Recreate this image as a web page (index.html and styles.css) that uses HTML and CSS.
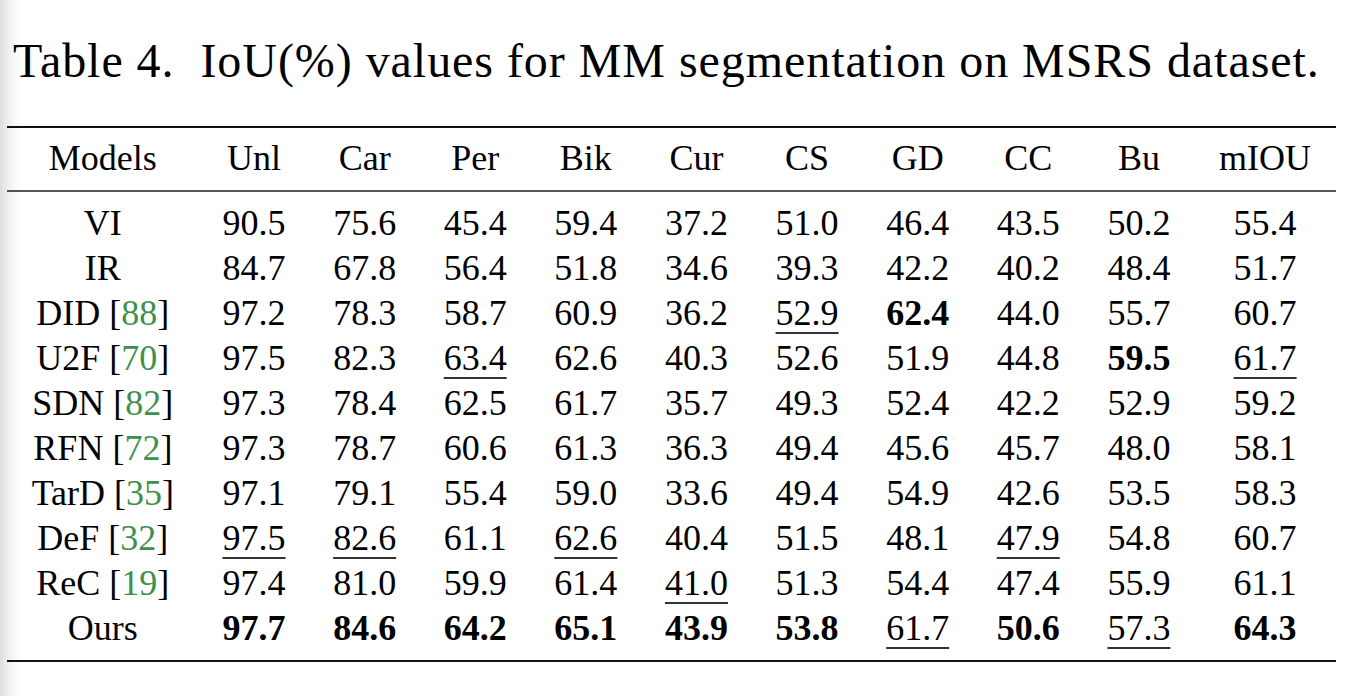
FILE: index.html
```html
<!DOCTYPE html>
<html lang="en">
<head>
<meta charset="utf-8">
<title>Table 4</title>
<link rel="stylesheet" href="styles.css">
</head>
<body>
<div class="page">
  <div class="caption">Table 4.&nbsp; IoU(%) values for MM segmentation on MSRS dataset.</div>
  <table class="results">
    <colgroup>
      <col class="c-model">
      <col class="c-num"><col class="c-num"><col class="c-num"><col class="c-num"><col class="c-num">
      <col class="c-num"><col class="c-num"><col class="c-num"><col class="c-num">
      <col class="c-miou">
    </colgroup>
    <thead>
      <tr>
        <th>Models</th><th>Unl</th><th>Car</th><th>Per</th><th>Bik</th><th>Cur</th><th>CS</th><th>GD</th><th>CC</th><th>Bu</th><th>mIOU</th>
      </tr>
    </thead>
    <tbody>
      <tr class="first">
        <td>VI</td><td>90.5</td><td>75.6</td><td>45.4</td><td>59.4</td><td>37.2</td><td>51.0</td><td>46.4</td><td>43.5</td><td>50.2</td><td>55.4</td>
      </tr>
      <tr>
        <td>IR</td><td>84.7</td><td>67.8</td><td>56.4</td><td>51.8</td><td>34.6</td><td>39.3</td><td>42.2</td><td>40.2</td><td>48.4</td><td>51.7</td>
      </tr>
      <tr>
        <td>DID [<span class="ref">88</span>]</td><td>97.2</td><td>78.3</td><td>58.7</td><td>60.9</td><td>36.2</td><td><span class="second">52.9</span></td><td><b>62.4</b></td><td>44.0</td><td>55.7</td><td>60.7</td>
      </tr>
      <tr>
        <td>U2F [<span class="ref">70</span>]</td><td>97.5</td><td>82.3</td><td><span class="second">63.4</span></td><td>62.6</td><td>40.3</td><td>52.6</td><td>51.9</td><td>44.8</td><td><b>59.5</b></td><td><span class="second">61.7</span></td>
      </tr>
      <tr>
        <td>SDN [<span class="ref">82</span>]</td><td>97.3</td><td>78.4</td><td>62.5</td><td>61.7</td><td>35.7</td><td>49.3</td><td>52.4</td><td>42.2</td><td>52.9</td><td>59.2</td>
      </tr>
      <tr>
        <td>RFN [<span class="ref">72</span>]</td><td>97.3</td><td>78.7</td><td>60.6</td><td>61.3</td><td>36.3</td><td>49.4</td><td>45.6</td><td>45.7</td><td>48.0</td><td>58.1</td>
      </tr>
      <tr>
        <td>TarD [<span class="ref">35</span>]</td><td>97.1</td><td>79.1</td><td>55.4</td><td>59.0</td><td>33.6</td><td>49.4</td><td>54.9</td><td>42.6</td><td>53.5</td><td>58.3</td>
      </tr>
      <tr>
        <td>DeF [<span class="ref">32</span>]</td><td><span class="second">97.5</span></td><td><span class="second">82.6</span></td><td>61.1</td><td><span class="second">62.6</span></td><td>40.4</td><td>51.5</td><td>48.1</td><td><span class="second">47.9</span></td><td>54.8</td><td>60.7</td>
      </tr>
      <tr>
        <td>ReC [<span class="ref">19</span>]</td><td>97.4</td><td>81.0</td><td>59.9</td><td>61.4</td><td><span class="second">41.0</span></td><td>51.3</td><td>54.4</td><td>47.4</td><td>55.9</td><td>61.1</td>
      </tr>
      <tr class="last">
        <td>Ours</td><td><b>97.7</b></td><td><b>84.6</b></td><td><b>64.2</b></td><td><b>65.1</b></td><td><b>43.9</b></td><td><b>53.8</b></td><td><span class="second">61.7</span></td><td><b>50.6</b></td><td><span class="second">57.3</span></td><td><b>64.3</b></td>
      </tr>
    </tbody>
  </table>
</div>
</body>
</html>
```

FILE: styles.css
```css
html, body {
  margin: 0;
  padding: 0;
}

body {
  width: 1356px;
  height: 696px;
  overflow: hidden;
  background: linear-gradient(to right, #dedede 0px, #eeeeee 7px, #f9f9f9 15px, #ffffff 24px);
  font-family: "Liberation Serif", "Times New Roman", serif;
  color: #000;
}

.page {
  padding-top: 33px;
}

.caption {
  font-size: 48px;
  line-height: 56px;
  letter-spacing: 0.95px;
  padding-left: 13px;
  margin-bottom: 37px;
  white-space: nowrap;
}

.results {
  margin-left: 7px;
  width: 1329px;
  table-layout: fixed;
  border-collapse: separate;
  border-spacing: 0;
  font-size: 36px;
  line-height: 45px;
}

.c-model { width: 191.7px; }
.c-num { width: 110.6px; }
.c-miou { width: 141.7px; }

.results th,
.results td {
  text-align: center;
  padding: 0;
  white-space: nowrap;
  font-weight: normal;
}

.results thead th {
  border-top: 2px solid #111;
  border-bottom: 2px solid #555;
  padding-top: 8px;
  padding-bottom: 9px;
}

.results tr.first td {
  padding-top: 9px;
}

.results tr.last td {
  padding-bottom: 9px;
  border-bottom: 2px solid #111;
}

.results b {
  font-weight: bold;
}

.ref {
  color: #3f8f4e;
}

.second {
  text-decoration: underline;
  text-decoration-thickness: 1.5px;
  text-underline-offset: 7px;
  text-decoration-color: #333;
}
```
